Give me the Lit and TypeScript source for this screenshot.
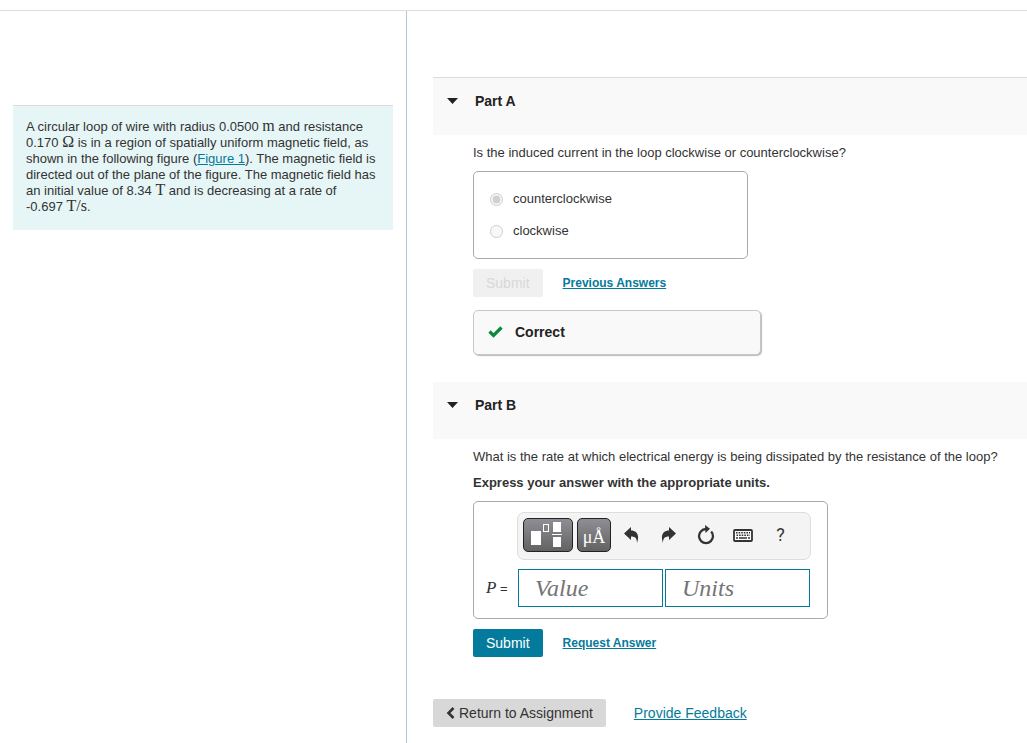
import { LitElement, html, css, svg } from "lit";
import { customElement, property } from "lit/decorators.js";

@customElement("problem-part")
class ProblemPart extends LitElement {
  @property() heading = "";
  @property({ type: Boolean, reflect: true }) first = false;

  static styles = css`
    :host {
      display: block;
      font-family: "Liberation Sans", Arial, sans-serif;
    }
    .head {
      min-height: 27px;
      padding: 15px 14px;
      background: #f9f9f9;
    }
    :host([first]) .head {
      border-top: 1px solid #dcdcdc;
    }
    .toggle {
      display: flex;
      align-items: center;
      gap: 17px;
      padding: 0;
      border: 0;
      background: none;
      color: #222;
      font: bold 14px/16px "Liberation Sans", Arial, sans-serif;
    }
    .arrow {
      display: block;
      width: 11px;
      height: 6px;
    }
    .body {
      padding: 10px 14px 0 40px;
    }
  `;

  render() {
    return html`
      <div class="head">
        <button class="toggle" aria-expanded="true">
          <svg class="arrow" viewBox="0 0 11 6"><path d="M0 0H11L5.500 6Z" fill="#222" /></svg>
          ${this.heading}
        </button>
      </div>
      <div class="body"><slot></slot></div>
    `;
  }
}

const undoPath = svg`<path d="M7 0V3.500C12.500 3.500 16 8 13 16C13 11.500 11.500 9.500 7 9.500V13L0 6.500Z" fill="#333"/>`;

@customElement("app-root")
class AppRoot extends LitElement {
  static styles = css`
    :host {
      display: block;
      padding-top: 10px;
      background: #fff;
      color: #333;
      font: 13px/16px "Liberation Sans", Arial, sans-serif;
    }
    .page {
      display: grid;
      grid-template-columns: minmax(0, 406fr) minmax(0, 621fr);
      min-height: calc(100vh - 10px);
      box-sizing: border-box;
      border-top: 1px solid #dcdcdc;
    }
    .intro {
      padding: 94px 13px 0;
    }
    .statement {
      margin: 0;
      padding: 13px 8px 15px 13px;
      border-top: 1px solid #dcdcdc;
      background: #e6f6f6;
    }
    .unit {
      font-family: "Liberation Serif", serif;
      font-size: 16px;
      line-height: 1px;
    }
    .quantity {
      white-space: nowrap;
    }
    .work {
      padding: 66px 0 16px 26px;
      border-left: 1px solid #b6c6d9;
    }
    a {
      color: #047a9c;
      text-decoration: underline;
    }
    p {
      margin: 0;
    }
    .choices {
      box-sizing: border-box;
      width: 275px;
      max-width: 100%;
      margin: 10px 0;
      padding: 19px 16px;
      display: grid;
      gap: 16px;
      border: 1px solid #aaa;
      border-radius: 5px;
    }
    .choice {
      display: flex;
      align-items: center;
      gap: 10px;
    }
    .choice input {
      width: 13px;
      height: 13px;
      margin: 0;
    }
    .actions {
      display: flex;
      align-items: center;
      gap: 20px;
      font-size: 12px;
      font-weight: bold;
    }
    .btn {
      height: 28px;
      padding: 0 13px;
      border: 0;
      border-radius: 2px;
      background: #047a9c;
      color: #fff;
      font: 14px/16px "Liberation Sans", Arial, sans-serif;
    }
    .btn:disabled {
      background: #f0f0f0;
      color: #d8d8d8;
    }
    .verdict {
      box-sizing: border-box;
      width: 288px;
      max-width: 100%;
      height: 45px;
      margin: 13px 0 27px;
      padding: 0 14px 1px;
      display: flex;
      align-items: center;
      gap: 12px;
      border: 1px solid #c6c6c6;
      border-radius: 5px;
      background: #f9f9f9;
      box-shadow: 1px 1px 1px #bbb;
      color: #222;
      font-size: 14px;
      font-weight: bold;
    }
    .hint {
      margin-top: 10px;
      font-weight: bold;
    }
    .answer {
      box-sizing: border-box;
      width: 355px;
      max-width: 100%;
      margin: 10px 0;
      padding: 10px 16px 11px 12px;
      display: grid;
      grid-template-columns: 31px minmax(0, 1fr);
      row-gap: 9px;
      align-items: center;
      border: 1px solid #aaa;
      border-radius: 5px;
    }
    .tools {
      box-sizing: border-box;
      grid-column: 2;
      height: 48px;
      padding: 0 11px 2px 5px;
      display: flex;
      align-items: center;
      border: 1px solid #ddd;
      border-radius: 7px;
      background: #f4f4f4;
    }
    .tool {
      height: 34px;
      flex: 1;
      padding: 0;
      display: grid;
      place-items: center;
      border: 0;
      background: none;
      color: #333;
      font: 18px/20px Roboto, sans-serif;
    }
    .key {
      flex: none;
      box-sizing: border-box;
      border: 1px solid #222;
      border-radius: 5px;
      background: linear-gradient(#8f8e96, #626262);
      color: #fff;
    }
    .template {
      width: 50px;
      margin-right: 4px;
      padding-right: 2px;
    }
    .symbols {
      width: 34px;
      margin-right: 2px;
      padding-top: 4px;
      font: 18px/20px "Liberation Serif", serif;
    }
    .equals {
      white-space: nowrap;
    }
    .var {
      font: italic 17px/20px "Liberation Serif", serif;
    }
    .fields {
      display: grid;
      grid-template-columns: 1fr 1fr;
      gap: 2px;
      padding: 0 1px;
    }
    .field {
      box-sizing: border-box;
      width: 100%;
      min-width: 0;
      height: 38px;
      padding: 0 16px;
      border: 1px solid #047a9c;
      border-radius: 0;
      background: #fff;
      font: italic 24px/28px "Liberation Serif", serif;
    }
    .field::placeholder {
      color: #757575;
    }
    .foot {
      display: flex;
      align-items: center;
      gap: 28px;
      margin-top: 42px;
      font-size: 14px;
    }
    .return {
      display: flex;
      align-items: center;
      gap: 4px;
      background: #d8d8d8;
      color: #333;
    }
    svg {
      display: block;
    }
  `;

  render() {
    return html`
      <div class="page">
        <aside class="intro">
          <p class="statement">
            A circular loop of wire with radius 0.0500 <span class="unit">m</span> and resistance
            0.170 <span class="unit">Ω</span> is in a region of spatially uniform magnetic field, as
            shown in the following figure (<a href="#figure1">Figure 1</a>). The magnetic field is
            directed out of the plane of the figure. The magnetic field has an initial value of 8.34
            <span class="unit">T</span> and is decreasing at a rate of
            <span class="quantity">-0.697 <span class="unit">T/s</span>.</span>
          </p>
        </aside>
        <main class="work">
          <problem-part first heading="Part A">
            <p>Is the induced current in the loop clockwise or counterclockwise?</p>
            <div class="choices" role="radiogroup">
              <label class="choice"><input type="radio" name="dir" checked disabled />counterclockwise</label>
              <label class="choice"><input type="radio" name="dir" disabled />clockwise</label>
            </div>
            <div class="actions">
              <button class="btn" disabled>Submit</button>
              <a href="#previous">Previous Answers</a>
            </div>
            <div class="verdict">
              <svg width="15" height="12" viewBox="0 0 15 12">
                <path d="M1.500 5.500L5.500 9.500L13.500 1.500" fill="none" stroke="#0b8a3c" stroke-width="3.200" />
              </svg>
              Correct
            </div>
          </problem-part>
          <problem-part heading="Part B">
            <p>What is the rate at which electrical energy is being dissipated by the resistance of the loop?</p>
            <p class="hint">Express your answer with the appropriate units.</p>
            <div class="answer">
              <div class="tools" role="toolbar">
                <button class="tool key template" aria-label="Templates">
                  <svg width="32" height="26" viewBox="0 0 32 26" fill="#fff">
                    <rect x="0" y="9" width="10" height="14" />
                    <rect x="12.500" y="2.500" width="5" height="7" fill="none" stroke="#fff" />
                    <rect x="22" y="0" width="8" height="10" />
                    <rect x="21" y="12" width="10" height="1" />
                    <rect x="22" y="15" width="8" height="10" />
                  </svg>
                </button>
                <button class="tool key symbols" aria-label="Symbols">μÅ</button>
                <button class="tool" aria-label="Undo">
                  <svg width="15" height="16" viewBox="0 0 15 16">${undoPath}</svg>
                </button>
                <button class="tool" aria-label="Redo">
                  <svg width="15" height="16" viewBox="0 0 15 16"><g transform="translate(15 0) scale(-1 1)">${undoPath}</g></svg>
                </button>
                <button class="tool" aria-label="Reset">
                  <svg width="18" height="20" viewBox="0 0 18 20">
                    <path d="M9.500 4A7 7 0 0 0 3.800 6.400A7 7 0 1 0 14.200 6.400" fill="none" stroke="#333" stroke-width="2.300" />
                    <path d="M8 0L13 3.800L8.500 8Z" fill="#333" />
                  </svg>
                </button>
                <button class="tool" aria-label="Keyboard">
                  <svg width="20" height="13" viewBox="0 0 20 13">
                    <rect x="1" y="1" width="18" height="11" rx="1" fill="#fff" stroke="#333" stroke-width="1.800" />
                    <path d="M3 3.700H17M3.500 6.200H17" stroke="#333" stroke-width="1.600" stroke-dasharray="1.600 1" />
                    <path d="M3 9H5M6 9H14M15 9H17" stroke="#333" stroke-width="1.600" />
                  </svg>
                </button>
                <button class="tool" aria-label="Help">?</button>
              </div>
              <span class="equals"><span class="var">P</span> =</span>
              <div class="fields">
                <input class="field" aria-label="Value" placeholder="Value" />
                <input class="field" aria-label="Units" placeholder="Units" />
              </div>
            </div>
            <div class="actions">
              <button class="btn">Submit</button>
              <a href="#request">Request Answer</a>
            </div>
          </problem-part>
          <div class="foot">
            <button class="btn return">
              <svg width="9" height="12" viewBox="0 0 9 12"><path d="M7.500 1L2.500 6L7.500 11" fill="none" stroke="#333" stroke-width="2.600" /></svg>
              Return to Assignment
            </button>
            <a href="#feedback">Provide Feedback</a>
          </div>
        </main>
      </div>
    `;
  }
}
